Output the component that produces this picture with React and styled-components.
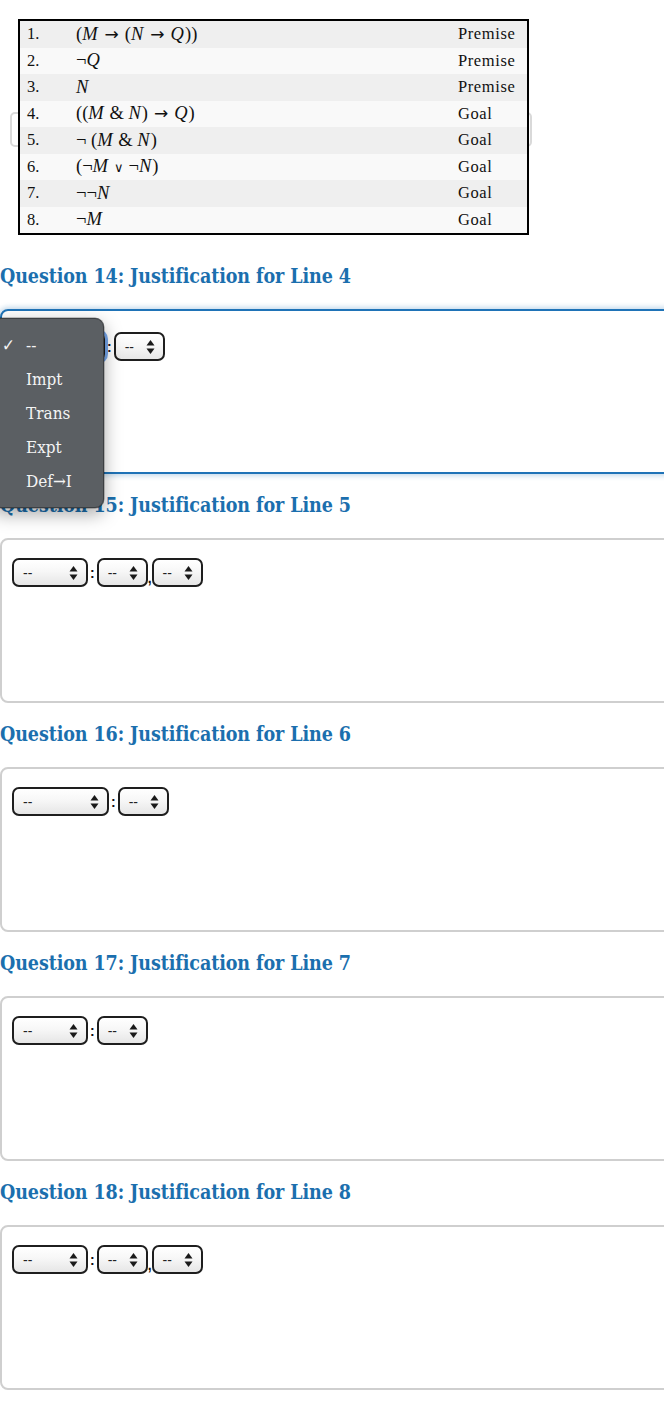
import React from "react";
import styled, { createGlobalStyle } from "styled-components";

const Global = createGlobalStyle`
  html, body { margin: 0; padding: 0; background: #fff; overflow-x: hidden; }
  body { font-family: "Liberation Serif", serif; }
`;

const Page = styled.div`
  width: 664px;
  padding: 19px 0 40px;
  overflow: hidden;
`;

const TableWrap = styled.div`
  position: relative;
  margin-left: 18px;
  width: 511px;
`;

const GhostBox = styled.div`
  position: absolute;
  left: -8px;
  top: 93px;
  width: 522px;
  height: 35px;
  box-sizing: border-box;
  border: 2px solid #d9d9d9;
  border-radius: 5px;
  z-index: 0;
`;

const Table = styled.div`
  position: relative;
  z-index: 1;
  border: 2px solid #000;
  background: #fff;
`;

const Row = styled.div`
  display: grid;
  grid-template-columns: 56px 382px 69px;
  height: 26.5px;
  align-items: center;
  background: ${(p) => (p.$odd ? "#efefef" : "#f9f9f9")};
  color: #111;
`;

const Num = styled.span`
  padding-left: 7px;
  font-size: 16.5px;
  font-family: "Liberation Serif", serif;
`;

const Formula = styled.span`
  font-size: 18.5px;
  font-family: "Liberation Serif", serif;
  white-space: pre;
`;

const Op = styled.span`
  display: inline-block;
  font-family: "DejaVu Sans", sans-serif;
  font-size: ${(p) => p.$size || 17}px;
  margin: 0 ${(p) => p.$gap || 2}px;
`;

const V = styled.i`
  font-style: italic;
  padding-right: 1px;
`;

const Just = styled.span`
  font-size: 16.5px;
  letter-spacing: 0.6px;
  font-family: "Liberation Serif", serif;
`;

const Section = styled.section`
  margin-top: ${(p) => p.$mt}px;
`;

const Heading = styled.h2`
  margin: 0;
  height: 24px;
  line-height: 24px;
  font-family: "DejaVu Serif Condensed", "DejaVu Serif", serif;
  font-stretch: condensed;
  font-weight: 700;
  font-size: 19.5px;
  color: #1b6fae;
  white-space: nowrap;
  letter-spacing: -0.1px;
`;

const Box = styled.div`
  position: relative;
  margin-top: 20px;
  width: 690px;
  height: 165px;
  box-sizing: border-box;
  border: 2px solid ${(p) => (p.$focus ? "#1f73b7" : "#cfcfcf")};
  border-radius: 8px;
  padding: ${(p) => (p.$focus ? "21px" : "18px")} 10px;
  box-shadow: ${(p) =>
    p.$focus ? "0 0 5px 2px rgba(31,115,183,0.25)" : "none"};
  display: flex;
  align-items: flex-start;
`;

const Controls = styled.div`
  display: flex;
  align-items: center;
`;

const Select = styled.div`
  position: relative;
  width: ${(p) => p.$w}px;
  height: 29px;
  box-sizing: border-box;
  border: 2px solid #1e1e1e;
  border-radius: 7px;
  background: linear-gradient(#ffffff 0%, #f7f7f7 45%, #e6e6e6 100%);
  box-shadow: ${(p) =>
    p.$focus ? "0 0 0 3px rgba(60,130,230,0.7)" : "inset 0 1px 0 #fff"};
  display: flex;
  align-items: center;
  padding-left: 9px;
  font-family: "Liberation Sans", Arial, sans-serif;
  font-size: 14px;
  color: #222;
`;

const Arrows = styled.svg`
  position: absolute;
  right: 8px;
  top: 50%;
  transform: translateY(-50%);
`;

const Sep = styled.span`
  font-family: "Liberation Sans", Arial, sans-serif;
  font-weight: 700;
  font-size: 14px;
  color: #111;
  padding: 0 ${(p) => p.$pad}px;
  line-height: 1;
  align-self: ${(p) => (p.$comma ? "flex-end" : "center")};
  margin-bottom: ${(p) => (p.$comma ? "2px" : "0")};
`;

const Popup = styled.div`
  position: absolute;
  left: -10px;
  top: 7px;
  width: 112px;
  padding: 9px 0;
  box-sizing: border-box;
  background: #5b5f63;
  border: 1px solid #3c3f42;
  border-radius: 9px;
  box-shadow: 0 6px 18px rgba(0, 0, 0, 0.35), 0 0 0 0.5px rgba(0,0,0,0.4);
  z-index: 5;
`;

const Item = styled.div`
  position: relative;
  height: 34px;
  line-height: 34px;
  padding-left: 33px;
  font-family: "DejaVu Serif Condensed", "DejaVu Serif", serif;
  font-stretch: condensed;
  font-size: 17px;
  color: #f4f4f4;
  white-space: nowrap;
`;

const Check = styled.span`
  position: absolute;
  left: 9px;
  top: 0;
  font-family: "DejaVu Sans", sans-serif;
  font-size: 17px;
`;

function SelectCtl({ w, focus }) {
  return (
    <Select $w={w} $focus={focus}>
      {focus ? null : "--"}
      <Arrows width="9" height="15" viewBox="0 0 9 15">
        <path d="M4.5 0.5 L8.5 6 L0.5 6 Z" fill="#1a1a1a" />
        <path d="M0.5 9 L8.5 9 L4.5 14.5 Z" fill="#1a1a1a" />
      </Arrows>
    </Select>
  );
}

const A = () => <Op $gap={6}>→</Op>;

const rows = [
  ["1.", <>(<V>M</V><A />(<V>N</V><A /><V>Q</V>))</>, "Premise"],
  ["2.", <>¬<V>Q</V></>, "Premise"],
  ["3.", <><V>N</V></>, "Premise"],
  ["4.", <>((<V>M</V> &amp; <V>N</V>)<A /><V>Q</V>)</>, "Goal"],
  ["5.", <>¬ (<V>M</V> &amp; <V>N</V>)</>, "Goal"],
  ["6.", <>(¬<V>M</V><Op $size={13} $gap={5}>∨</Op>¬<V>N</V>)</>, "Goal"],
  ["7.", <>¬¬<V>N</V></>, "Goal"],
  ["8.", <>¬<V>M</V></>, "Goal"],
];

const questions = [
  { n: 14, line: 4, selects: [93, 51], seps: [":"], focus: true, mt: 30 },
  { n: 15, line: 5, selects: [76, 51, 51], seps: [":", ","], mt: 20 },
  { n: 16, line: 6, selects: [97, 51], seps: [":"], mt: 20 },
  { n: 17, line: 7, selects: [76, 51], seps: [":"], mt: 20 },
  { n: 18, line: 8, selects: [76, 51, 51], seps: [":", ","], mt: 20 },
];

export default function App() {
  return (
    <Page>
      <Global />
      <TableWrap>
        <GhostBox />
        <Table>
          {rows.map((r, i) => (
            <Row key={i} $odd={i % 2 === 0}>
              <Num>{r[0]}</Num>
              <Formula>{r[1]}</Formula>
              <Just>{r[2]}</Just>
            </Row>
          ))}
        </Table>
      </TableWrap>
      {questions.map((q) => (
        <Section key={q.n} $mt={q.mt}>
          <Heading>
            Question {q.n}: Justification for Line {q.line}
          </Heading>
          <Box $focus={q.focus}>
            <Controls>
              {q.selects.map((w, i) => (
                <React.Fragment key={i}>
                  {i > 0 && (
                    <Sep $comma={q.seps[i - 1] === ","} $pad={q.seps[i - 1] === "," ? 0 : 2}>
                      {q.seps[i - 1]}
                    </Sep>
                  )}
                  <SelectCtl w={w} focus={q.focus && i === 0} />
                </React.Fragment>
              ))}
            </Controls>
            {q.focus && (
              <Popup>
                <Item>
                  <Check>✓</Check>--
                </Item>
                <Item>Impt</Item>
                <Item>Trans</Item>
                <Item>Expt</Item>
                <Item>Def→I</Item>
              </Popup>
            )}
          </Box>
        </Section>
      ))}
    </Page>
  );
}
